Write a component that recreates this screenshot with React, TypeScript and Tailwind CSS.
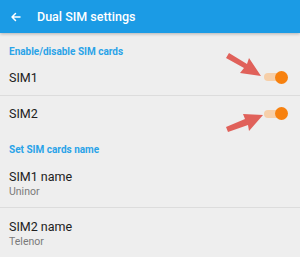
import React from "react";

function Toggle() {
  return (
    <div className="relative w-[26px] h-[13px] mr-[12px]">
      <div className="absolute left-[2px] top-[2.5px] w-[20px] h-[8px] rounded-full bg-[#f6cfa9]" />
      <div className="absolute right-0 top-0 w-[13px] h-[13px] rounded-full bg-[#f7810f]" />
    </div>
  );
}

export default function App() {
  return (
    <div
      className="relative w-[300px] h-[257px] overflow-hidden bg-[#eeeeee]"
      style={{ fontFamily: "Roboto, 'Noto Sans', sans-serif" }}
    >
      <div className="relative z-10 h-[33px] bg-[#1b9be5] flex items-center shadow-[0_1px_3px_rgba(0,0,0,0.25)]">
        <svg width="12" height="12" viewBox="0 0 24 24" className="ml-[10px]" fill="none" stroke="white" strokeWidth="3" strokeLinecap="round" strokeLinejoin="round">
          <path d="M20 12H4M11 5l-7 7 7 7" />
        </svg>
        <span className="ml-[15px] text-[12.5px] leading-[16px] font-medium text-white">Dual SIM settings</span>
      </div>

      <div className="h-[27px] pt-[13px] pl-[9px] text-[10px] leading-[12px] font-bold text-[#2aa3e8]">
        Enable/disable SIM cards
      </div>
      <div className="h-[35px] flex items-center justify-between pl-[9px]">
        <span className="text-[12.5px] leading-[16px] text-[#212121]">SIM1</span>
        <div className="-mt-[1px]"><Toggle /></div>
      </div>
      <div className="h-px bg-[#dcdcdc]" />
      <div className="h-[36px] flex items-center justify-between pl-[9px]">
        <span className="text-[12.5px] leading-[16px] text-[#212121]">SIM2</span>
        <div className="-mt-[1px]"><Toggle /></div>
      </div>

      <div className="h-[24px] pt-[12px] pl-[9px] text-[10px] leading-[12px] font-bold text-[#2aa3e8]">
        Set SIM cards name
      </div>
      <div className="h-[51px] pt-[13px] pl-[9px] flex flex-col">
        <span className="text-[12.5px] leading-[16px] text-[#212121]">SIM1 name</span>
        <span className="text-[10.5px] leading-[13px] text-[#7a7a7a]">Uninor</span>
      </div>
      <div className="h-px bg-[#dcdcdc]" />
      <div className="pt-[11px] pl-[9px] flex flex-col">
        <span className="text-[12.5px] leading-[16px] text-[#212121]">SIM2 name</span>
        <span className="text-[10.5px] leading-[13px] text-[#7a7a7a]">Telenor</span>
      </div>

      <svg className="absolute left-0 top-0 pointer-events-none z-20" width="300" height="257" viewBox="0 0 300 257">
        <g fill="#e0615a">
          <path d="M226 58 L229 53 L247 64 L249 58 L261 76 L240 73 L244 68 Z" />
          <path d="M228 132 L226 127 L245 119 L243 114 L263 115 L249 131 L248 125 Z" />
        </g>
      </svg>
    </div>
  );
}
